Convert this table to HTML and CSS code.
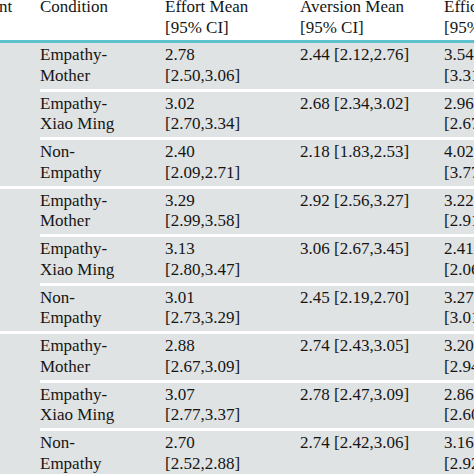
FILE: index.html
```html
<!DOCTYPE html>
<html lang="en">
<head>
<meta charset="utf-8">
<title>Table</title>
<link rel="stylesheet" href="styles.css">
</head>
<body>
<div class="sheet">
<table class="results">
  <colgroup>
    <col class="c-exp"><col class="c-cond"><col class="c-eff"><col class="c-av"><col class="c-ef2">
  </colgroup>
  <thead>
    <tr>
      <th>Experiment</th>
      <th class="cond">Condition</th>
      <th class="eff">Effort Mean [95% CI]</th>
      <th class="av">Aversion Mean [95% CI]</th>
      <th class="ef2"><span class="hl">Efficacy Mean</span><span class="hl">[95% CI]</span></th>
    </tr>
  </thead>
  <tbody>
    <tr class="group">
      <td rowspan="3" class="exp">1</td>
      <td class="cond">Empathy-Mother</td>
      <td class="eff">2.78 [2.50,3.06]</td>
      <td class="av">2.44 [2.12,2.76]</td>
      <td class="ef2">3.54 [3.31,3.77]</td>
    </tr>
    <tr>
      <td class="cond">Empathy-Xiao Ming</td>
      <td class="eff">3.02 [2.70,3.34]</td>
      <td class="av">2.68 [2.34,3.02]</td>
      <td class="ef2">2.96 [2.67,3.25]</td>
    </tr>
    <tr>
      <td class="cond">Non-Empathy</td>
      <td class="eff">2.40 [2.09,2.71]</td>
      <td class="av">2.18 [1.83,2.53]</td>
      <td class="ef2">4.02 [3.77,4.27]</td>
    </tr>
    <tr class="group">
      <td rowspan="3" class="exp">2</td>
      <td class="cond">Empathy-Mother</td>
      <td class="eff">3.29 [2.99,3.58]</td>
      <td class="av">2.92 [2.56,3.27]</td>
      <td class="ef2">3.22 [2.91,3.53]</td>
    </tr>
    <tr>
      <td class="cond">Empathy-Xiao Ming</td>
      <td class="eff">3.13 [2.80,3.47]</td>
      <td class="av">3.06 [2.67,3.45]</td>
      <td class="ef2">2.41 [2.06,2.76]</td>
    </tr>
    <tr>
      <td class="cond">Non-Empathy</td>
      <td class="eff">3.01 [2.73,3.29]</td>
      <td class="av">2.45 [2.19,2.70]</td>
      <td class="ef2">3.27 [3.01,3.53]</td>
    </tr>
    <tr class="group">
      <td rowspan="3" class="exp">3</td>
      <td class="cond">Empathy-Mother</td>
      <td class="eff">2.88 [2.67,3.09]</td>
      <td class="av">2.74 [2.43,3.05]</td>
      <td class="ef2">3.20 [2.94,3.46]</td>
    </tr>
    <tr>
      <td class="cond">Empathy-Xiao Ming</td>
      <td class="eff">3.07 [2.77,3.37]</td>
      <td class="av">2.78 [2.47,3.09]</td>
      <td class="ef2">2.86 [2.60,3.12]</td>
    </tr>
    <tr>
      <td class="cond">Non-Empathy</td>
      <td class="eff">2.70 [2.52,2.88]</td>
      <td class="av">2.74 [2.42,3.06]</td>
      <td class="ef2">3.16 [2.92,3.40]</td>
    </tr>
  </tbody>
</table>
</div>
</body>
</html>
```

FILE: styles.css
```css
html, body {
  margin: 0;
  padding: 0;
  background: #ffffff;
  overflow: hidden;
}

.sheet {
  margin: -3px 0 0 -67px;
  width: 620px;
}

.results {
  border-collapse: separate;
  border-spacing: 0;
  table-layout: fixed;
  width: 611px;
  font-family: "Liberation Serif", "Times New Roman", serif;
  font-size: 17px;
  line-height: 20.5px;
  color: #151515;
}

.c-exp { width: 107px; }
.c-cond { width: 125px; }
.c-eff { width: 135px; }
.c-av { width: 144px; }
.c-ef2 { width: 100px; }

.results th,
.results td {
  text-align: left;
  vertical-align: top;
  font-weight: normal;
  padding: 2px 0 2.5px 0;
}

.results th {
  background: #ffffff;
  padding: 0 0 2px 0;
  border-bottom: 3px solid #5dc2cb;
}

.results .hl {
  display: block;
  white-space: nowrap;
}

.results td {
  background: #e0e3e3;
  border-top: 3px solid #ffffff;
}

.results tbody tr:first-child td {
  border-top: 0;
}

.results .cond { padding-right: 40px; }
.results .eff { padding-right: 35px; }
.results .av { padding-right: 14px; }
.results .ef2 { padding-right: 40px; }
.results .exp { color: transparent; }
```
